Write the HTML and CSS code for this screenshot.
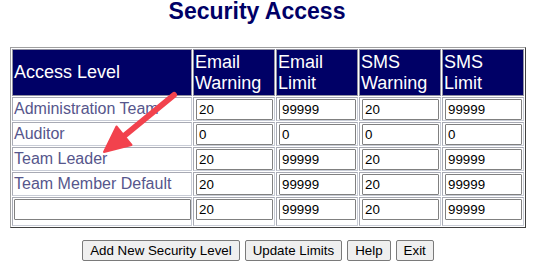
FILE: index.html
```html
<!DOCTYPE html>
<html>
<head>
<meta charset="utf-8">
<link rel="stylesheet" href="styles.css">
</head>
<body>
<div class="page">
  <div class="title">Security Access</div>
  <table class="grid">
    <colgroup>
      <col class="c-name"><col class="c-num"><col class="c-num"><col class="c-num"><col class="c-num">
    </colgroup>
    <tr class="head">
      <th>Access Level</th>
      <th>Email<br>Warning</th>
      <th>Email<br>Limit</th>
      <th>SMS<br>Warning</th>
      <th>SMS<br>Limit</th>
    </tr>
    <tr class="row">
      <td class="name">Administration Team</td>
      <td><input class="num" type="text" value="20"></td>
      <td><input class="num" type="text" value="99999"></td>
      <td><input class="num" type="text" value="20"></td>
      <td><input class="num" type="text" value="99999"></td>
    </tr>
    <tr class="row">
      <td class="name">Auditor</td>
      <td><input class="num" type="text" value="0"></td>
      <td><input class="num" type="text" value="0"></td>
      <td><input class="num" type="text" value="0"></td>
      <td><input class="num" type="text" value="0"></td>
    </tr>
    <tr class="row">
      <td class="name">Team Leader</td>
      <td><input class="num" type="text" value="20"></td>
      <td><input class="num" type="text" value="99999"></td>
      <td><input class="num" type="text" value="20"></td>
      <td><input class="num" type="text" value="99999"></td>
    </tr>
    <tr class="row">
      <td class="name">Team Member Default</td>
      <td><input class="num" type="text" value="20"></td>
      <td><input class="num" type="text" value="99999"></td>
      <td><input class="num" type="text" value="20"></td>
      <td><input class="num" type="text" value="99999"></td>
    </tr>
    <tr class="row last">
      <td><input class="newname" type="text" value=""></td>
      <td><input class="num" type="text" value="20"></td>
      <td><input class="num" type="text" value="99999"></td>
      <td><input class="num" type="text" value="20"></td>
      <td><input class="num" type="text" value="99999"></td>
    </tr>
  </table>
  <div class="actions">
    <button class="btn" type="button">Add New Security Level</button>
    <button class="btn" type="button">Update Limits</button>
    <button class="btn" type="button">Help</button>
    <button class="btn" type="button">Exit</button>
  </div>
  <svg class="arrow" width="535" height="273" viewBox="0 0 535 273" xmlns="http://www.w3.org/2000/svg">
    <line x1="174" y1="95" x2="124" y2="136" stroke="#f2424d" stroke-width="6" stroke-linecap="round"/>
    <polygon points="104,152 116.5,126.5 131.5,145" fill="#f2424d" stroke="#f2424d" stroke-width="2" stroke-linejoin="round"/>
  </svg>
</div>
</body>
</html>
```

FILE: styles.css
```css
html, body {
  margin: 0;
  padding: 0;
  background: #ffffff;
}

.page {
  position: relative;
  width: 535px;
  height: 273px;
  font-family: "Liberation Sans", Arial, sans-serif;
}

.title {
  width: 514px;
  text-align: center;
  font-size: 23px;
  line-height: 22px;
  font-weight: bold;
  color: #000066;
  margin: 0 0 25px 0;
}

.grid {
  margin-left: 10px;
  width: 516px;
  table-layout: fixed;
  border-collapse: separate;
  border-spacing: 1px;
  border: 1px solid;
  border-color: #a0a0a0 #404040 #404040 #a0a0a0;
}

.c-name { width: 180px; }
.c-num { width: 82px; }

.grid th,
.grid td {
  box-sizing: border-box;
  border: 1px solid;
  border-color: #a8aab4 #c8ccd6 #c8ccd6 #a8aab4;
  padding: 0 1px;
}

.head th {
  height: 47px;
  background: #000066;
  color: #ffffff;
  font-size: 18px;
  line-height: 21px;
  font-weight: normal;
  text-align: left;
  vertical-align: middle;
  border-color: #9090a0;
}

.row td {
  height: 24px;
  vertical-align: middle;
}

.row.last td {
  height: 29px;
  vertical-align: top;
  padding-top: 1px;
}

.name {
  font-size: 16px;
  color: #56568c;
  white-space: nowrap;
  overflow: hidden;
}

.num,
.newname {
  box-sizing: border-box;
  height: 21px;
  margin: 0 0 0 1px;
  padding: 1px 2px;
  border: 1px solid #808080;
  border-radius: 1px;
  font-family: "Liberation Sans", Arial, sans-serif;
  font-size: 13.33px;
  color: #000000;
  background: #ffffff;
  display: block;
}

.num { width: 77px; }
.newname { width: 177px; margin-left: 0; }

.actions {
  width: 516px;
  margin-top: 12px;
  display: flex;
  justify-content: center;
  gap: 5px;
}

.btn {
  font-family: "Liberation Sans", Arial, sans-serif;
  font-size: 13.33px;
  height: 21px;
  padding: 1px 7px;
  color: #000000;
  background: #efefef;
  border: 1px solid #7a7a7a;
  border-radius: 2px;
}

.arrow {
  position: absolute;
  left: 0;
  top: 0;
  pointer-events: none;
}
```
